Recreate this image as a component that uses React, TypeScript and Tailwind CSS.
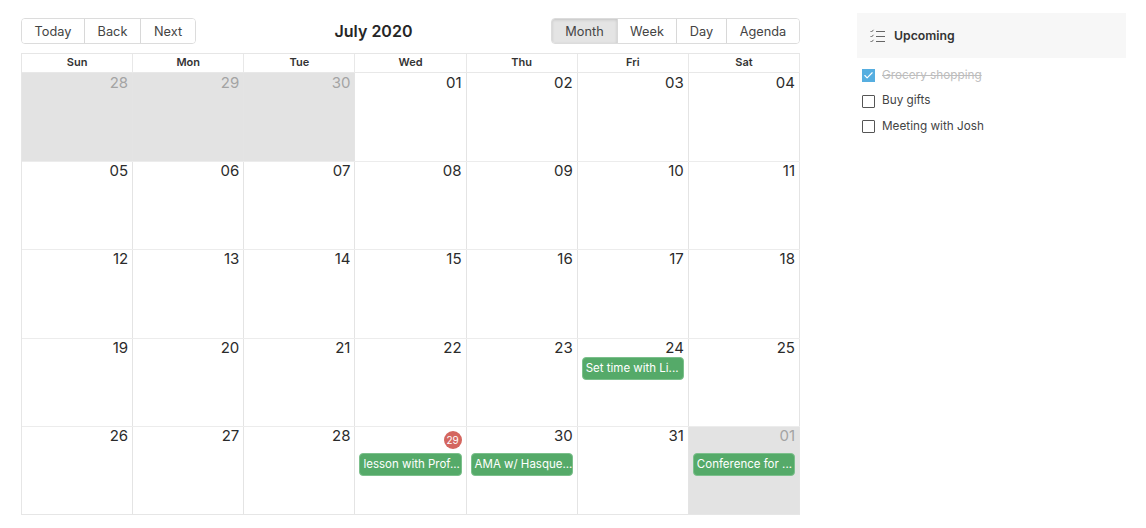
import { Check } from 'lucide-react'

type Day = { label: string; off?: boolean; event?: string; badge?: boolean }

const headers = ['Sun', 'Mon', 'Tue', 'Wed', 'Thu', 'Fri', 'Sat']

const weeks: Day[][] = [
  [{ label: '28', off: true }, { label: '29', off: true }, { label: '30', off: true }, { label: '01' }, { label: '02' }, { label: '03' }, { label: '04' }],
  [{ label: '05' }, { label: '06' }, { label: '07' }, { label: '08' }, { label: '09' }, { label: '10' }, { label: '11' }],
  [{ label: '12' }, { label: '13' }, { label: '14' }, { label: '15' }, { label: '16' }, { label: '17' }, { label: '18' }],
  [{ label: '19' }, { label: '20' }, { label: '21' }, { label: '22' }, { label: '23' }, { label: '24', event: 'Set time with Li...' }, { label: '25' }],
  [
    { label: '26' },
    { label: '27' },
    { label: '28' },
    { label: '29', badge: true, event: 'lesson with Prof...' },
    { label: '30', event: 'AMA w/ Hasque...' },
    { label: '31' },
    { label: '01', off: true, event: 'Conference for ...' },
  ],
]

function ToolButton({ label, active }: { label: string; active?: boolean }) {
  return (
    <button
      className={
        'h-full pt-[1px] border-l border-[#d8d8d8] first:border-l-0 text-[12.75px] text-[#444] ' +
        (active ? 'bg-[#e4e4e4] shadow-[inset_0_1px_3px_rgba(0,0,0,0.14)]' : 'bg-white')
      }
    >
      {label}
    </button>
  )
}

function DayCell({ day, firstRow, lastRow }: { day: Day; firstRow: boolean; lastRow: boolean }) {
  return (
    <div className={'flex flex-col min-w-0 border-r border-[#e4e4e4] ' + (day.off ? 'bg-[#e3e3e3]' : 'bg-white')}>
      <div className={'flex justify-end items-start pr-[4px] ' + (lastRow ? 'h-[26px]' : 'h-[18px]')}>
        {day.badge ? (
          <span className="mt-[4px] w-[18px] h-[18px] rounded-full bg-[#d4665f] text-white text-[10px] leading-[18px] text-center">
            {day.label}
          </span>
        ) : (
          <span className={'text-[15px] leading-[19px] ' + (firstRow ? '' : '-mt-[1px] ') + (day.off ? 'text-[#a3a3a3]' : 'text-[#2b2b2b]')}>
            {day.label}
          </span>
        )}
      </div>
      {day.event && (
        <div className="ml-[4px] mr-[4px] h-[23px] rounded-[4px] bg-[#55aa69] border border-[#7cc08c] px-[3px] text-white text-[11.5px] leading-[21px] whitespace-nowrap">
          {day.event}
        </div>
      )}
    </div>
  )
}

function Todo({ text, done }: { text: string; done?: boolean }) {
  return (
    <div className="h-[25.5px] flex items-center gap-[7px]">
      {done ? (
        <span className="w-[13px] h-[13px] bg-[#56aee0] flex items-center justify-center">
          <Check size={11} strokeWidth={2.5} color="white" />
        </span>
      ) : (
        <span className="w-[13px] h-[13px] border-[1.5px] border-[#555] rounded-[1px]" />
      )}
      <span className={'text-[11.75px] ' + (done ? 'text-[#bdbdbd] line-through' : 'text-[#444]')}>{text}</span>
    </div>
  )
}

export default function App() {
  return (
    <div className="w-[1146px] h-[528px] bg-white flex overflow-hidden font-['Inter',sans-serif]">
      <div className="w-[779px] ml-[21px] pt-[18px]">
        <div className="h-[26px] flex items-center justify-between">
          <div className="h-full grid grid-cols-[62px_56px_55px] border border-[#dcdcdc] rounded-[4px] overflow-hidden">
            <ToolButton label="Today" />
            <ToolButton label="Back" />
            <ToolButton label="Next" />
          </div>
          <span className="text-[16px] font-semibold text-[#262626]">July 2020</span>
          <div className="h-full grid grid-cols-[65px_59px_50px_73px] border border-[#dcdcdc] rounded-[4px] overflow-hidden">
            <ToolButton label="Month" active />
            <ToolButton label="Week" />
            <ToolButton label="Day" />
            <ToolButton label="Agenda" />
          </div>
        </div>

        <div className="mt-[9px] border-l border-t border-b border-[#e6e6e6] h-[462px] grid grid-rows-[19px_repeat(5,1fr)]">
          <div className="grid grid-cols-7 border-b border-[#e8e8e8]">
            {headers.map((h) => (
              <div key={h} className="text-center text-[11px] font-semibold leading-[17px] text-[#333] border-r border-[#e8e8e8]">
                {h}
              </div>
            ))}
          </div>
          {weeks.map((week, w) => (
            <div key={w} className={'grid grid-cols-7 min-h-0 ' + (w > 0 ? 'border-t border-[#ececec]' : '')}>
              {week.map((day, d) => (
                <DayCell key={d} day={day} firstRow={w === 0} lastRow={w === 4} />
              ))}
            </div>
          ))}
        </div>
      </div>

      <div className="w-[269px] ml-[57px] pt-[13px]">
        <div className="h-[45px] bg-[#f7f7f7] flex items-center pl-[13px] gap-[9px]">
          <svg width="15" height="14" viewBox="0 0 15 14" fill="none" stroke="#666" strokeWidth="1">
            <path d="M0.5 2l1 1 2-2.2M0.5 7l1 1 2-2.2M0.5 12l1 1 2-2.2" />
            <path d="M6 2.5h9M6 7.5h9M6 12.5h9" />
          </svg>
          <span className="text-[12.25px] font-semibold text-[#333] pt-[1px]">Upcoming</span>
        </div>
        <div className="mt-[5px] pl-[5px]">
          <Todo text="Grocery shopping" done />
          <Todo text="Buy gifts" />
          <Todo text="Meeting with Josh" />
        </div>
      </div>
    </div>
  )
}
